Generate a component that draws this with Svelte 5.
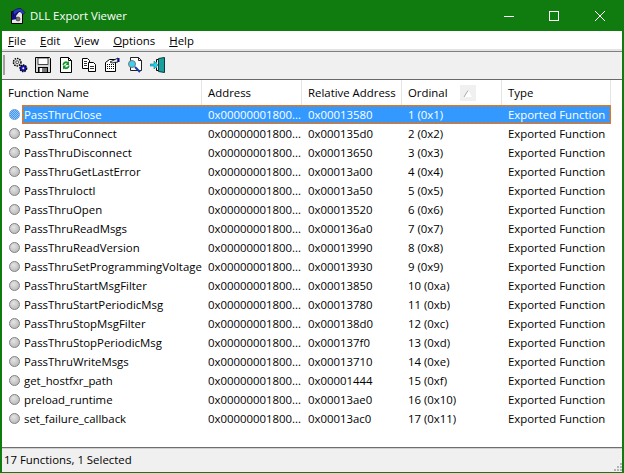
<script lang="ts">
	const names = [
		'PassThruClose', 'PassThruConnect', 'PassThruDisconnect', 'PassThruGetLastError', 'PassThruIoctl',
		'PassThruOpen', 'PassThruReadMsgs', 'PassThruReadVersion', 'PassThruSetProgrammingVoltage',
		'PassThruStartMsgFilter', 'PassThruStartPeriodicMsg', 'PassThruStopMsgFilter', 'PassThruStopPeriodicMsg',
		'PassThruWriteMsgs', 'get_hostfxr_path', 'preload_runtime', 'set_failure_callback'
	];
	const rvas = [
		'00013580', '000135d0', '00013650', '00013a00', '00013a50', '00013520', '000136a0', '00013990', '00013930',
		'00013850', '00013780', '000138d0', '000137f0', '00013710', '00001444', '00013ae0', '00013ac0'
	];
	const rows = names.map((name, i) => ({
		name,
		rva: '0x' + rvas[i],
		ordinal: `${i + 1} (0x${(i + 1).toString(16)})`
	}));
	const menus = [['F', 'ile'], ['E', 'dit'], ['V', 'iew'], ['O', 'ptions'], ['H', 'elp']];
</script>

<div class="window">
	<div class="titlebar">
		<svg class="app-icon" width="16" height="16" viewBox="0 0 16 16">
			<path d="M1.500 3.500h11v12h-11z" fill="#e8e8e8" stroke="#000"/>
			<path d="M2 4h7L6 8l1 3-5 1z" fill="#10108a"/>
			<path d="M3 3l5-2.500h3l4 4-2 2-3-3-3 1-3 3z" fill="#2a3ac8" stroke="#000" stroke-width=".5"/>
			<circle cx="8" cy="11" r="2" fill="#777" stroke="#222" stroke-width=".6"/>
		</svg>
		<span class="title">DLL Export Viewer</span>
		<div class="caption">
			<svg width="46" height="30" viewBox="0 0 46 30"><path d="M18 15.500h10" stroke="#fff"/></svg>
			<svg width="46" height="30" viewBox="0 0 46 30"><rect x="17.500" y="10.500" width="9" height="9" fill="none" stroke="#fff"/></svg>
			<svg width="46" height="30" viewBox="0 0 46 30"><path d="M17 10l10 10M27 10L17 20" stroke="#fff" fill="none"/></svg>
		</div>
	</div>

	<div class="menubar">
		{#each menus as [key, rest]}
			<span class="menu"><u>{key}</u>{rest}</span>
		{/each}
	</div>

	<div class="toolbar">
		<div class="grip"></div>
		<svg class="tool" width="16" height="16" viewBox="0 0 17 17">
			<circle cx="5.500" cy="5.500" r="4" fill="#d8d8d8" stroke="#000" stroke-width="1.500" stroke-dasharray="1.600 1"/>
			<circle cx="5.500" cy="5.500" r="1.500" fill="#fff" stroke="#000" stroke-width=".7"/>
			<circle cx="12" cy="12" r="3.500" fill="#1414c0" stroke="#000" stroke-width="1.600" stroke-dasharray="1.600 1"/>
			<circle cx="12" cy="12" r="1" fill="#fff"/>
		</svg>
		<svg class="tool" width="16" height="16" viewBox="0 0 16 16">
			<path d="M.500.500h14l1 1v14H.500z" fill="#d8d8d8" stroke="#000"/>
			<rect x="3" y="1" width="10" height="6.500" fill="#fff" stroke="#000" stroke-width=".7"/>
			<rect x="3.500" y="10.500" width="9" height="5" fill="#777" stroke="#000"/>
			<rect x="5" y="11" width="2" height="4" fill="#fff"/>
		</svg>
		<svg class="tool" width="16" height="16" viewBox="0 0 16 16">
			<path d="M2.500.500h8l3 3v12h-11z" fill="#fff" stroke="#000"/>
			<path d="M10.500.500v3h3" fill="none" stroke="#000"/>
			<path d="M4.500 8a3.500 3.500 0 0 1 5.500-3l1-1v4H7.500L9 6.500A2 2 0 0 0 6 8z" fill="#129a2a"/>
			<path d="M11.500 8.500a3.500 3.500 0 0 1-5.500 3l-1 1v-4h3.500L7 10a2 2 0 0 0 3-1.500z" fill="#129a2a"/>
		</svg>
		<svg class="tool" width="16" height="16" viewBox="0 0 16 16">
			<path d="M1.500 1.500h5l2 2v8h-7z" fill="#fff" stroke="#000"/>
			<path d="M7.500 5.500h5l2 2v7h-7z" fill="#fff" stroke="#000"/>
			<path d="M3 4.500h3M3 6.500h3M3 8.500h3M9 9.500h4M9 11.500h4" stroke="#000" stroke-width=".8"/>
		</svg>
		<svg class="tool" width="16" height="16" viewBox="0 0 16 16">
			<path d="M1.500 5.500l4-3h6v12h-10z" fill="#fff" stroke="#000"/>
			<path d="M3 7.500h7M3 9.500h7M3 11.500h7" stroke="#000" stroke-dasharray="1 1"/>
			<path d="M6 5l8-4v4l-6 1z" fill="#dce8f8" stroke="#000" stroke-width=".8"/>
			<path d="M14.500 1v4" stroke="#10107a" stroke-width="2"/>
		</svg>
		<svg class="tool" width="16" height="16" viewBox="0 0 16 16">
			<path d="M3.500.500h8l3 3v10h-11z" fill="#fff" stroke="#222"/>
			<path d="M11.500.500v3h3" fill="none" stroke="#222"/>
			<circle cx="5" cy="7" r="3.500" fill="#3fd0f0" stroke="#777"/>
			<path d="M8 10l5 5" stroke="#1a3ab0" stroke-width="2"/>
		</svg>
		<svg class="tool" width="16" height="16" viewBox="0 0 16 16">
			<path d="M8.500 1.500l6-1v15l-6-1z" fill="#19a09c" stroke="#0a3a40"/>
			<path d="M8 2.500H6.500v3M8 13.500H6.500v-3" fill="none" stroke="#000"/>
			<path d="M0 7h4V4l4 4-4 4V9H0z" fill="#1fd0e8" stroke="#067" stroke-width=".5"/>
		</svg>
	</div>

	<div class="list">
		<div class="head">
			<span class="h-cell">Function Name</span>
			<span class="h-cell">Address</span>
			<span class="h-cell">Relative Address</span>
			<span class="h-cell">Ordinal<span class="sort"><svg width="16" height="16" viewBox="0 0 16 16"><path d="M4 12h8L8.500 5.500H8z" fill="#fff"/><path d="M4 12l4-6.500" stroke="#aaa"/></svg></span></span>
			<span class="h-cell">Type</span>
		</div>
		{#each rows as row, i}
			<div class="row">
				<span class="dot" class:dot-selected={i === 0}></span>
				<div class="cells" class:selected={i === 0}>
					<span class="cell name">{row.name}</span>
					<span class="cell">0x00000001800...</span>
					<span class="cell">{row.rva}</span>
					<span class="cell">{row.ordinal}</span>
					<span class="cell">Exported Function</span>
				</div>
			</div>
		{/each}
	</div>

	<div class="statusbar">
		<span>17 Functions, 1 Selected</span>
		<svg class="sizer" width="8" height="8" viewBox="0 0 8 8" fill="#b4b4b4">
			<rect x="6" y="0" width="2" height="2"/>
			<rect x="3" y="3" width="2" height="2"/><rect x="6" y="3" width="2" height="2"/>
			<rect x="0" y="6" width="2" height="2"/><rect x="3" y="6" width="2" height="2"/><rect x="6" y="6" width="2" height="2"/>
		</svg>
	</div>
</div>

<style>
	:global(body) {
		margin: 0;
		background: #fff;
	}

	.window {
		width: 624px;
		height: 473px;
		box-sizing: border-box;
		display: flex;
		flex-direction: column;
		border: solid #107c10;
		border-width: 0 2px 1px;
		font-family: "Open Sans", "Noto Sans", sans-serif;
		font-size: 11.4px;
		color: #000;
		overflow: hidden;
	}

	.titlebar {
		height: 31px;
		margin: 0 -2px;
		flex: none;
		display: flex;
		align-items: center;
		background: #107c10;
		color: #fff;
	}

	.app-icon {
		margin-left: 10px;
		margin-right: 4px;
	}

	.title {
		font-size: 11.4px;
	}

	.caption {
		margin-left: auto;
		display: flex;
	}

	.menubar {
		height: 20px;
		flex: none;
		box-sizing: border-box;
		display: flex;
		align-items: center;
		background: #fff;
		border-bottom: 2px solid #e4e4e4;
	}

	.menu {
		padding: 0 6px;
		margin-right: 2px;
	}

	.toolbar {
		height: 29px;
		flex: none;
		box-sizing: border-box;
		display: flex;
		align-items: center;
		gap: 7px;
		padding: 0 0 2px 1px;
		background: #f0f0f0;
		border-top: 1px solid #808080;
		border-bottom: 1px solid #696969;
	}

	.grip {
		width: 2px;
		height: 20px;
		background: #a0a0a0;
	}

	.tool {
		flex: none;
	}

	.list {
		flex: 1;
		background: #fff;
	}

	.head {
		height: 25px;
		display: grid;
		grid-template-columns: 200px 100px 100px 100px 109px;
	}

	.h-cell {
		display: flex;
		align-items: center;
		padding-left: 6px;
		border-right: 1px solid #e5e5e5;
		box-sizing: border-box;
		white-space: nowrap;
	}

	.sort {
		display: flex;
		margin-left: 12px;
		background: #f0f0f0;
	}

	.row {
		height: 19px;
		display: flex;
		align-items: center;
	}

	.dot {
		width: 11px;
		height: 11px;
		margin: 0 2px 0 7px;
		box-sizing: border-box;
		flex: none;
		border-radius: 50%;
		background: radial-gradient(circle at 40% 35%, #e4e4e4, #b0b0b0);
		border: 1px solid #808080;
	}

	.dot-selected {
		background: repeating-conic-gradient(#3399ff 0 25%, #9cc4ec 0 50%) 0 0 / 2px 2px;
		border-color: #6a9ad8;
	}

	.cells {
		display: grid;
		grid-template-columns: 180px 100px 100px 100px 109px;
		width: 589px;
		height: 19px;
	}

	.selected {
		background: #3399ff;
		color: #fff;
		box-shadow: inset 0 0 0 1px #d9772a;
		outline: 2px dotted #d9772a;
		outline-offset: -2px;
	}

	.cell {
		padding-left: 6px;
		white-space: nowrap;
		line-height: 19px;
	}

	.name {
		padding-left: 2px;
	}

	.statusbar {
		height: 25px;
		flex: none;
		box-sizing: border-box;
		display: flex;
		align-items: center;
		padding: 0 0 2px 2px;
		position: relative;
		background: #f0f0f0;
		border-top: 1px solid #6e6e6e;
		box-shadow: inset 0 1px #d0d0d0;
	}

	.sizer {
		position: absolute;
		right: 0;
		bottom: 1px;
	}
</style>
